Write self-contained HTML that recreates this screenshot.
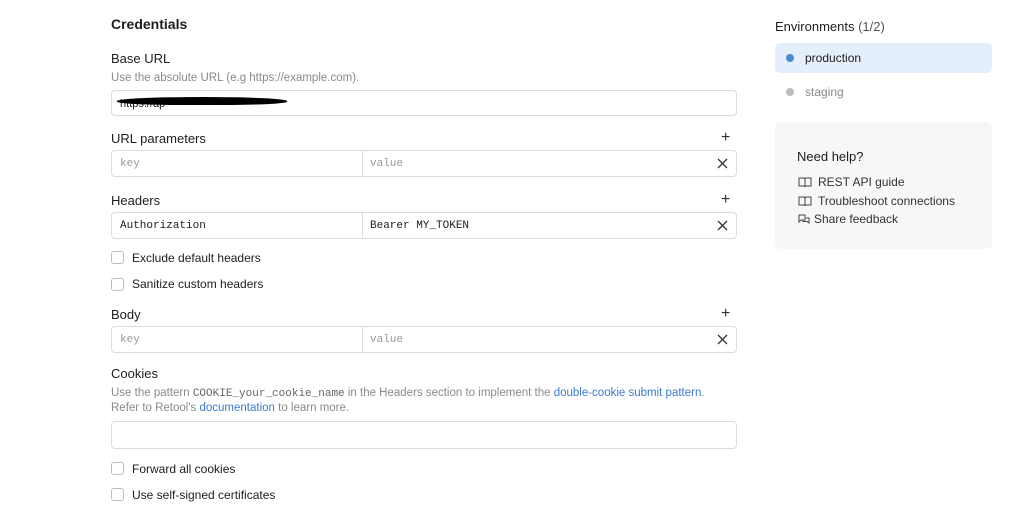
<!DOCTYPE html>
<html><head><meta charset="utf-8"><style>
*{margin:0;padding:0;box-sizing:border-box}
body{width:1024px;height:514px;background:#fff;font-family:"Liberation Sans",sans-serif;color:#1d1d1d;position:relative;overflow:hidden}
.a{position:absolute;white-space:nowrap}
.lbl{font-size:13px;color:#1d1d1d}
.hint{font-size:11.5px;color:#8a8a8a}
.inp{position:absolute;left:111px;width:626px;border:1px solid #dcdcdc;border-radius:4px;background:#fff}
.kv{height:27px}
.kv .div{position:absolute;left:250px;top:0;bottom:0;border-left:1px solid #dcdcdc}
.mono{font-family:"Liberation Mono",monospace;font-size:11px}
.kv .k{position:absolute;left:8px;top:7px}
.kv .v{position:absolute;left:258px;top:7px}
.ph{color:#9a9a9a}
.x{position:absolute;right:8px;top:7px}
.plus{position:absolute;left:721px;font-size:16px;color:#333;font-weight:300}
.cb{position:absolute;left:111px;width:13px;height:13px;border:1px solid #bdbdbd;border-radius:3px}
.cbl{position:absolute;left:132px;font-size:12px;color:#1d1d1d}
a{color:#3b7bd0;text-decoration:none}
</style></head><body>
<div class="a" style="left:111px;top:16px;font-size:14px;font-weight:bold">Credentials</div>
<div class="a lbl" style="left:111px;top:51px">Base URL</div>
<div class="a hint" style="left:111px;top:72px">Use the absolute URL (e.g https://example.com).</div>
<div class="inp" style="top:90px;height:26px"><span class="a" style="left:8px;top:7px;font-size:11px">https://ap</span><div class="a" style="left:5px;top:6px;width:170px;height:8px;background:#000;border-radius:50% 50% 40% 40%"></div></div>
<div class="a lbl" style="left:111px;top:131px">URL parameters</div>
<div class="plus" style="top:129px">+</div>
<div class="inp kv" style="top:150px"><div class="div"></div><span class="k mono ph">key</span><span class="v mono ph">value</span><svg class="x" width="11" height="11" viewBox="0 0 11 11"><path d="M1 1L10 10M10 1L1 10" stroke="#333" stroke-width="1.3"/></svg></div>
<div class="a lbl" style="left:111px;top:193px">Headers</div>
<div class="plus" style="top:191px">+</div>
<div class="inp kv" style="top:212px"><div class="div"></div><span class="k mono">Authorization</span><span class="v mono">Bearer MY_TOKEN</span><svg class="x" width="11" height="11" viewBox="0 0 11 11"><path d="M1 1L10 10M10 1L1 10" stroke="#333" stroke-width="1.3"/></svg></div>
<div class="cb" style="top:251px"></div><div class="cbl" style="top:251px">Exclude default headers</div>
<div class="cb" style="top:278px"></div><div class="cbl" style="top:277px">Sanitize custom headers</div>
<div class="a lbl" style="left:111px;top:307px">Body</div>
<div class="plus" style="top:305px">+</div>
<div class="inp kv" style="top:326px"><div class="div"></div><span class="k mono ph">key</span><span class="v mono ph">value</span><svg class="x" width="11" height="11" viewBox="0 0 11 11"><path d="M1 1L10 10M10 1L1 10" stroke="#333" stroke-width="1.3"/></svg></div>
<div class="a lbl" style="left:111px;top:366px">Cookies</div>
<div class="a hint" style="left:111px;top:387px">Use the pattern <span class="mono" style="color:#666">COOKIE_your_cookie_name</span> in the Headers section to implement the <a>double-cookie submit pattern</a>.</div>
<div class="a hint" style="left:111px;top:402px">Refer to Retool's <a>documentation</a> to learn more.</div>
<div class="inp" style="top:421px;height:28px"></div>
<div class="cb" style="top:462px"></div><div class="cbl" style="top:462px">Forward all cookies</div>
<div class="cb" style="top:488px"></div><div class="cbl" style="top:488px">Use self-signed certificates</div>

<div class="a" style="left:775px;top:19px;font-size:13px">Environments <span style="color:#555">(1/2)</span></div>
<div class="a" style="left:775px;top:43px;width:217px;height:30px;background:#e5effc;border-radius:5px"></div>
<div class="a" style="left:786px;top:54px;width:8px;height:8px;border-radius:50%;background:#4a89d8"></div>
<div class="a" style="left:805px;top:51px;font-size:12px">production</div>
<div class="a" style="left:786px;top:88px;width:8px;height:8px;border-radius:50%;background:#bdbdbd"></div>
<div class="a" style="left:805px;top:85px;font-size:12px;color:#8a8a8a">staging</div>
<div class="a" style="left:775px;top:122px;width:217px;height:127px;background:#f7f7f7;border-radius:6px"></div>
<div class="a" style="left:797px;top:149px;font-size:13px">Need help?</div>
<svg class="a" style="left:798px;top:177px" width="14" height="11" viewBox="0 0 14 11"><path d="M1 1h4.5c1 0 1.5.6 1.5 1.5V10C7 9.3 6.4 9 5.5 9H1zM13 1H8.5C7.5 1 7 1.6 7 2.5V10c0-.7.6-1 1.5-1H13z" fill="none" stroke="#444" stroke-width="1"/></svg>
<div class="a" style="left:818px;top:175px;font-size:12px;color:#333">REST API guide</div>
<svg class="a" style="left:798px;top:196px" width="14" height="11" viewBox="0 0 14 11"><path d="M1 1h4.5c1 0 1.5.6 1.5 1.5V10C7 9.3 6.4 9 5.5 9H1zM13 1H8.5C7.5 1 7 1.6 7 2.5V10c0-.7.6-1 1.5-1H13z" fill="none" stroke="#444" stroke-width="1"/></svg>
<div class="a" style="left:818px;top:194px;font-size:12px;color:#333">Troubleshoot connections</div>
<svg class="a" style="left:798px;top:214px" width="12" height="11" viewBox="0 0 12 11"><path d="M1 1h6v5H3L1 8zM8 4h3v5l-2-1.5H5V6" fill="none" stroke="#444" stroke-width="1"/></svg>
<div class="a" style="left:814px;top:212px;font-size:12px;color:#333">Share feedback</div>
</body></html>
